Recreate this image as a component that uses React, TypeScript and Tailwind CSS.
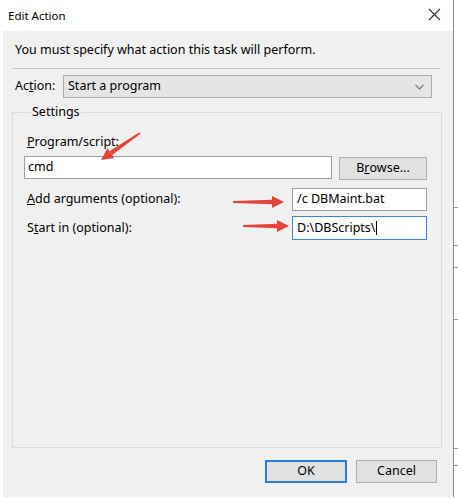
import React from "react";

const font = { fontFamily: '"Noto Sans", "Open Sans", Arial, sans-serif' };

function Arrow({ x1, y1, x2, y2 }: { x1: number; y1: number; x2: number; y2: number }) {
  const dx = x2 - x1;
  const dy = y2 - y1;
  const len = Math.sqrt(dx * dx + dy * dy);
  const ux = dx / len;
  const uy = dy / len;
  const head = 12;
  const hw = 6;
  const bx = x2 - ux * head;
  const by = y2 - uy * head;
  const px = -uy;
  const py = ux;
  const pts = `${x2},${y2} ${bx + px * hw},${by + py * hw} ${bx - px * hw},${by - py * hw}`;
  const tail = `${x1 + px * 1},${y1 + py * 1} ${bx + px * 2.2},${by + py * 2.2} ${bx - px * 2.2},${by - py * 2.2} ${x1 - px * 1},${y1 - py * 1}`;
  return (
    <g fill="#e5443b">
      <polygon points={tail} />
      <polygon points={pts} />
    </g>
  );
}

export default function App() {
  return (
    <div className="relative w-[458px] h-[499px] bg-white overflow-hidden text-black" style={font}>
      <div className="flex h-full">
        {/* Dialog */}
        <div className="flex flex-col w-[453px] h-[497px] bg-white border-r border-[#8a8a8a] box-content">
          {/* Title bar */}
          <div className="flex items-center justify-between h-[31px] pl-[8px] pr-[12px]">
            <span className="text-[11.5px] leading-none">Edit Action</span>
            <svg width="13" height="13" viewBox="0 0 13 13" className="mt-[-2px]">
              <path d="M1 1 L12 12 M12 1 L1 12" stroke="#333" strokeWidth="1.1" />
            </svg>
          </div>
          {/* Body */}
          <div className="flex-1 ml-[3px] bg-[#f0f0f0] flex flex-col pl-[9px] pr-[11px]">
            <div className="h-[37px] flex items-center pl-[3px] pt-[1px] text-[12.5px]">
              You must specify what action this task will perform.
            </div>
            <div className="h-px bg-[#c8c8c8] mr-[2px]" />
            <div className="flex items-center mt-[6px] h-[23px]">
              <span className="w-[51px] pl-[3px] text-[12.5px]">
                Ac<span className="underline">t</span>ion:
              </span>
              <div className="flex items-center justify-between w-[369px] h-[23px] bg-[#e5e5e5] border border-[#adadad] pl-[4px] pr-[7px] text-[12.5px]">
                <span>Start a program</span>
                <svg width="9" height="6" viewBox="0 0 9 6">
                  <path d="M0.5 0.8 L4.5 4.8 L8.5 0.8" stroke="#707070" strokeWidth="1.2" fill="none" />
                </svg>
              </div>
            </div>
            <fieldset className="mt-[6px] h-[344px] border border-[#dcdcdc] ml-0 pl-[11px] pr-[13px]">
              <legend className="ml-[7px] px-[1px] text-[12.5px] leading-[16px]">Settings</legend>
              <div className="pl-[3px] mt-[13px] h-[18px] flex items-center text-[12.5px]">
                <span>
                  <span className="underline">P</span>rogram/script:
                </span>
              </div>
              <div className="flex items-center mt-[4px] gap-[7px]">
                <div className="w-[308px] h-[23px] bg-white border border-[#a0a0a0] flex items-center pl-[3px] text-[12.5px]">
                  cmd
                </div>
                <div className="w-[88px] h-[23px] mt-[2px] bg-[#e1e1e1] border border-[#adadad] flex items-center justify-center text-[12.5px]">
                  B<span className="underline">r</span>owse...
                </div>
              </div>
              <div className="flex items-center justify-between mt-[8px] h-[23px]">
                <span className="pl-[3px] text-[12.5px]">
                  <span className="underline">A</span>dd arguments (optional):
                </span>
                <div className="w-[135px] h-[23px] mr-[1px] bg-white border border-[#a0a0a0] flex items-center pl-[4px] text-[12.5px]">
                  /c DBMaint.bat
                </div>
              </div>
              <div className="flex items-center justify-between mt-[5px] h-[24px]">
                <span className="pl-[3px] text-[12.5px]">
                  S<span className="underline">t</span>art in (optional):
                </span>
                <div className="w-[135px] h-[24px] mr-[1px] bg-white border border-[#3b8ad6] flex items-center pl-[4px] text-[12.5px]">
                  D:\DBScripts\<span className="inline-block w-px h-[14px] bg-black ml-[1px]" />
                </div>
              </div>
            </fieldset>
            <div className="flex justify-end gap-[9px] pr-[5px] mt-[12px]">
              <div className="w-[82px] h-[23px] bg-[#e1e1e1] border-2 border-[#2a7fd4] flex items-center justify-center text-[12.5px]">
                OK
              </div>
              <div className="w-[81px] h-[23px] bg-[#e1e1e1] border border-[#adadad] flex items-center justify-center text-[12.5px]">
                Cancel
              </div>
            </div>
          </div>
        </div>
        {/* Background window edge ticks */}
        <div className="flex-1 flex flex-col pt-[207px]">
          <div className="h-px bg-[#9a9a9a]" />
          <div className="h-[37px]" />
          <div className="h-px bg-[#9a9a9a]" />
          <div className="h-[21px]" />
          <div className="h-px bg-[#9a9a9a]" />
          <div className="h-[51px]" />
          <div className="h-px bg-[#9a9a9a]" />
          <div className="h-[128px]" />
          <div className="h-px bg-[#9a9a9a]" />
          <div className="h-[16px]" />
          <div className="h-px bg-[#9a9a9a]" />
        </div>
      </div>
      {/* Red annotation arrows */}
      <svg className="absolute left-0 top-0 pointer-events-none" width="458" height="499">
        <Arrow x1={140} y1={133} x2={101} y2={160} />
        <Arrow x1={233} y1={202} x2={284} y2={202} />
        <Arrow x1={243} y1={226} x2={289} y2={226} />
      </svg>
    </div>
  );
}
